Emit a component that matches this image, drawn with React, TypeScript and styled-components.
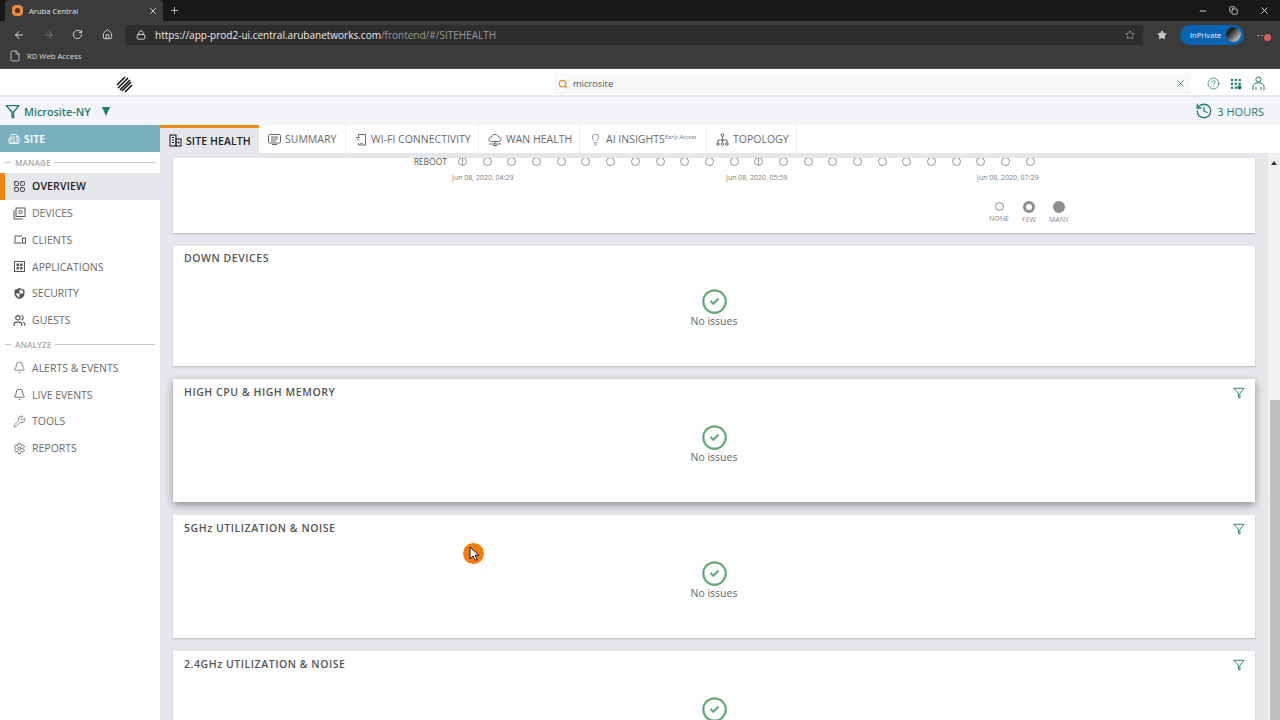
import styled, { createGlobalStyle } from "styled-components";
import {
    ArrowLeft, ArrowRight, Bell, Building2, CircleCheck, CircleHelp, Copy, File, History, Home,
    Lightbulb, LayoutGrid, Lock, Minus, Plus, RotateCw, Settings, Star, Users, Wrench, X, Search
} from "lucide-react";

const TEAL = "#1f7a72";
const GREY_BG = "#e6e7ea";

const GlobalStyle = createGlobalStyle`
    html, body { margin: 0; padding: 0; background: #fff; }
    * { box-sizing: border-box; }
    body { font-family: "Open Sans", "Noto Sans", sans-serif; }
`;

const Page = styled.div`
    position: relative;
    width: 1280px;
    height: 720px;
    overflow: hidden;
    display: flex;
    flex-direction: column;
`;

/* browser chrome */
const TabStrip = styled.div`
    height: 21px;
    flex: none;
    background: #181818;
    display: flex;
    align-items: flex-end;
    padding-left: 5px;
    color: #e8e8e8;
`;
const BrowserTab = styled.div`
    width: 158px;
    height: 21px;
    background: #3b3b3b;
    border-radius: 3px 3px 0 0;
    display: flex;
    align-items: center;
    padding: 0 5px 0 7px;
    font-size: 7.6px;
    gap: 6px;
`;
const Favicon = styled.span`
    width: 11px;
    height: 11px;
    border-radius: 4px;
    background: #e08a42;
    display: flex;
    align-items: center;
    justify-content: center;
    &::after {
        content: "";
        width: 5px;
        height: 5px;
        border-radius: 50%;
        background: #4a3426;
    }
`;
const TabTitle = styled.span`
    flex: 1;
`;
const NewTab = styled.span`
    margin-left: 6px;
    height: 21px;
    display: flex;
    align-items: center;
    color: #bbb;
`;
const WindowButtons = styled.div`
    margin-left: auto;
    height: 21px;
    display: flex;
    align-items: center;
    gap: 21px;
    padding-right: 10px;
    color: #eee;
`;
const Toolbar = styled.div`
    height: 25px;
    flex: none;
    background: #3b3b3b;
    display: flex;
    align-items: center;
    color: #ddd;
    padding: 2px 0 0 13px;
`;
const NavGlyph = styled.span<{ $dim?: boolean }>`
    width: 29.5px;
    display: flex;
    color: ${(p) => (p.$dim ? "#777" : "#ddd")};
`;
const AddressBar = styled.div`
    width: 1018px;
    height: 20px;
    margin-left: -6px;
    background: #2d2d2d;
    border-radius: 2px;
    display: flex;
    align-items: center;
    padding: 0 8px 0 11px;
    font-size: 10px;
    color: #ececec;
    gap: 9px;
`;
const UrlDim = styled.span`
    color: #9a9a9a;
`;
const UrlText = styled.span`
    flex: 1;
    white-space: nowrap;
`;
const Collections = styled.span`
    margin-left: 14px;
    display: flex;
    color: #ccc;
`;
const PrivatePill = styled.div`
    width: 64px;
    height: 20px;
    margin-left: 13px;
    border-radius: 10px;
    background: #0b63b3;
    display: flex;
    align-items: center;
    justify-content: space-between;
    padding: 0 3px 0 10px;
    font-size: 7.6px;
    color: #eaf3ff;
`;
const Avatar = styled.span`
    width: 15px;
    height: 15px;
    border-radius: 50%;
    background: linear-gradient(135deg, #222 30%, #aaa 75%);
`;
const MoreDots = styled.span`
    position: relative;
    margin-left: 13px;
    font-size: 10px;
    letter-spacing: 1px;
    color: #ddd;
    &::after {
        content: "";
        position: absolute;
        left: 7px;
        top: 6px;
        width: 7px;
        height: 7px;
        border-radius: 50%;
        background: #d9606a;
    }
`;
const Bookmarks = styled.div`
    height: 23px;
    flex: none;
    background: #3b3b3b;
    border-bottom: 1px solid #555;
    display: flex;
    align-items: center;
    gap: 6px;
    padding: 0 0 2px 9px;
    font-size: 7.7px;
    color: #ddd;
`;

/* app header */
const AppHeader = styled.div`
    height: 28px;
    flex: none;
    background: #fff;
    border-bottom: 2px solid ${GREY_BG};
    display: flex;
    align-items: center;
    padding: 3px 0 0 116px;
`;
const LogoSlot = styled.span`
    display: flex;
    margin-top: 1px;
`;
const SearchBox = styled.div`
    width: 637px;
    height: 21px;
    margin-left: 421px;
    background: #f7f9f9;
    display: flex;
    align-items: center;
    padding: 0 5px 0 4px;
    font-size: 9.3px;
    color: #555;
    gap: 5px;
`;
const SearchText = styled.span`
    flex: 1;
`;
const HeaderIcons = styled.div`
    display: flex;
    align-items: center;
    gap: 10px;
    margin-left: 16px;
    color: ${TEAL};
`;
const FilterBar = styled.div`
    height: 28px;
    flex: none;
    background: #f3f5f8;
    display: flex;
    align-items: center;
    padding: 0 16px 0 5px;
    color: ${TEAL};
    font-size: 10.8px;
    font-weight: 600;
`;
const SiteName = styled.span`
    margin-left: 4px;
`;
const Caret = styled.span`
    width: 0;
    height: 0;
    margin-left: 11px;
    border-left: 4.5px solid transparent;
    border-right: 4.5px solid transparent;
    border-top: 9px solid ${TEAL};
`;
const TimeRange = styled.div`
    margin-left: auto;
    display: flex;
    align-items: center;
    gap: 4px;
    font-size: 11px;
    font-weight: 500;
`;

/* main */
const Main = styled.div`
    flex: 1;
    min-height: 0;
    display: flex;
`;
const Sidebar = styled.nav`
    width: 160px;
    flex: none;
    background: #fff;
`;
const SiteHead = styled.div`
    height: 27px;
    background: #7aafbf;
    color: #f4f8fa;
    display: flex;
    align-items: center;
    gap: 4px;
    padding-left: 8px;
    font-size: 10.5px;
    font-weight: 700;
`;
const SectionLabel = styled.div`
    height: 21px;
    display: flex;
    align-items: center;
    gap: 4px;
    padding: 0 5px;
    font-size: 8px;
    font-weight: 700;
    color: #b5b5b5;
    &::before, &::after {
        content: "";
        height: 1px;
        background: #c8c8c8;
    }
    &::before { width: 6px; }
    &::after { flex: 1; }
`;
const NavRow = styled.div<{ $active?: boolean }>`
    height: 26.75px;
    display: flex;
    align-items: center;
    gap: 6px;
    padding-left: ${(p) => (p.$active ? "8px" : "13px")};
    border-left: ${(p) => (p.$active ? "5px solid #f5860f" : "none")};
    background: ${(p) => (p.$active ? GREY_BG : "transparent")};
    color: ${(p) => (p.$active ? "#222" : "#6a6a6a")};
    font-size: 10.5px;
    font-weight: ${(p) => (p.$active ? 600 : 400)};
    letter-spacing: ${(p) => (p.$active ? ".15px" : "0")};
`;
const Right = styled.div`
    flex: 1;
    min-width: 0;
    display: flex;
    flex-direction: column;
    background: ${GREY_BG};
`;
const Tabs = styled.div`
    height: 28px;
    flex: none;
    background: #fff;
    display: flex;
`;
const Tab = styled.div<{ $active?: boolean; $width: number }>`
    width: ${(p) => p.$width}px;
    display: flex;
    align-items: center;
    gap: 4px;
    padding-left: 9px;
    font-size: 10.5px;
    white-space: nowrap;
    color: ${(p) => (p.$active ? "#222" : "#6a6a6a")};
    font-weight: ${(p) => (p.$active ? 600 : 400)};
    letter-spacing: ${(p) => (p.$active ? ".1px" : "0")};
    background: ${(p) => (p.$active ? GREY_BG : "#fff")};
    border-top: ${(p) => (p.$active ? "3px solid #ee8a1d" : "none")};
    border-right: ${(p) => (p.$active ? "none" : "1px solid #f0f0f0")};
`;
const EarlyAccess = styled.sup`
    font-size: 6px;
    font-style: italic;
    margin-left: -4px;
    color: #777;
    position: relative;
    top: -2px;
`;
const ContentRow = styled.div`
    flex: 1;
    min-height: 0;
    display: flex;
`;
const Scroller = styled.div`
    flex: 1;
    min-width: 0;
    overflow: hidden;
    padding: 5px 13px 0 13px;
    display: flex;
    flex-direction: column;
    gap: 13px;
`;
const ScrollTrack = styled.div`
    width: 12px;
    flex: none;
    background: #f1f1f1;
    display: flex;
    flex-direction: column;
    align-items: flex-end;
`;
const ScrollArrow = styled.span`
    width: 0;
    height: 0;
    margin: 8px 3px 0 0;
    border-left: 3px solid transparent;
    border-right: 3px solid transparent;
    border-bottom: 4px solid #333;
`;
const ScrollThumb = styled.div`
    width: 10px;
    height: 320px;
    margin-top: 235px;
    background: #c1c1c1;
`;
const CardBox = styled.section<{ $height: number; $raised?: boolean }>`
    flex: none;
    height: ${(p) => p.$height}px;
    background: #fff;
    box-shadow: ${(p) => (p.$raised ? "0 3px 8px rgba(0,0,0,.38)" : "0 1px 2px rgba(0,0,0,.2)")};
`;
const CardHead = styled.div<{ $tall?: boolean }>`
    height: ${(p) => (p.$tall ? "45px" : "42px")};
    padding: ${(p) => (p.$tall ? "6px" : "5px")} 10px 0 11px;
    display: flex;
    align-items: flex-start;
    justify-content: space-between;
    color: #555;
    font-size: 10.5px;
    font-weight: 600;
    letter-spacing: .55px;
    line-height: 14px;
`;
const CardFilter = styled.span`
    display: flex;
    margin-top: 2px;
`;
const NoIssues = styled.div`
    display: flex;
    flex-direction: column;
    align-items: center;
    color: #666;
    font-size: 10.5px;
    line-height: 14px;
`;
const GreenCheck = styled(CircleCheck)`
    color: #68a97b;
    display: block;
    margin-bottom: -1px;
`;
const TimelineRow = styled.div`
    display: flex;
    align-items: flex-start;
    height: 8px;
`;
const TimelineLabel = styled.span`
    width: 274px;
    text-align: right;
    font-size: 8.5px;
    line-height: 8px;
    font-weight: 500;
    color: #555;
    flex: none;
`;
/* the marks run under the card's top edge, so the row cuts them off */
const Dots = styled.div`
    width: 577px;
    height: 8px;
    margin-left: 11px;
    overflow: hidden;
    display: flex;
    justify-content: space-between;
`;
const Dot = styled.span<{ $power?: boolean }>`
    position: relative;
    width: 9px;
    height: 9px;
    margin-top: -1px;
    border-radius: 50%;
    border: 1px solid #949494;
    flex: none;
    &::after {
        content: "";
        display: ${(p) => (p.$power ? "block" : "none")};
        position: absolute;
        left: 3px;
        top: -2px;
        width: 1px;
        height: 9px;
        background: #949494;
    }
`;
const Dates = styled.div`
    display: grid;
    grid-template-columns: 274px 251px auto;
    padding-left: 279px;
    margin-top: 7px;
    font-size: 7px;
    line-height: 10px;
    color: #777;
    opacity: .95;
`;
const Legend = styled.div`
    display: flex;
    justify-content: flex-end;
    padding-right: 181px;
    margin-top: 18px;
`;
const LegendItem = styled.div`
    width: 30px;
    display: flex;
    flex-direction: column;
    align-items: center;
    gap: 2px;
    font-size: 7px;
    line-height: 9px;
    color: #888;
`;
const LegendMark = styled.span<{ $kind: "none" | "few" | "many" }>`
    width: ${(p) => (p.$kind === "none" ? "9px" : "12px")};
    height: ${(p) => (p.$kind === "none" ? "9px" : "12px")};
    margin: ${(p) => (p.$kind === "none" ? "1px 0" : "0")};
    border-radius: 50%;
    border: ${(p) => (p.$kind === "none" ? "1px solid #888" : p.$kind === "few" ? "3px solid #8e8e8e" : "6px solid #8e8e8e")};
`;
const Pointer = styled.div`
    position: absolute;
    left: 463px;
    top: 543px;
    width: 21px;
    height: 21px;
    border-radius: 50%;
    background: #f57c0a;
`;

const FunnelIcon = ({ size = 13, weight = 1.3 }: { size?: number; weight?: number }) => (
    <svg width={size} height={size} viewBox="0 0 14 14" fill="none" stroke={TEAL} strokeWidth={weight} strokeLinejoin="round">
        <path d="M1 1.5h12L8 7.5v5.5L6.5 12V7.5z" />
    </svg>
);

const StripeLogo = () => (
    <svg width="17" height="17" viewBox="0 0 17 17" stroke="#111" strokeWidth="1.6">
        <path d="M1 9 9 1M2 12 12 2M4 14 14 4M6 15 15 6M9 16 16 9" />
    </svg>
);

const AppsGear = () => (
    <svg width="12" height="12" viewBox="0 0 14 14" fill={TEAL}>
        {[1, 5.5, 10].flatMap((y) => [1, 5.5, 10].map((x) => (x === 10 && y === 10 ? null : <rect key={`${x}-${y}`} x={x} y={y} width="2.6" height="2.6" />)))}
        <circle cx="11" cy="11" r="2.5" />
    </svg>
);

const PersonOutline = () => (
    <svg width="13" height="15" viewBox="0 0 13 15" fill="none" stroke={TEAL} strokeWidth="1">
        <circle cx="6.5" cy="3.5" r="2.6" />
        <path d="M1 14v-3.5C1 8 3.5 6.8 6.5 6.8S12 8 12 10.5V14M4 14v-3M9 14v-3" />
    </svg>
);

const DevicesIcon = () => (
    <svg width="13" height="13" viewBox="0 0 13 13" fill="none" stroke="#555" strokeWidth="1">
        <rect x="3" y="1" width="9" height="8.5" />
        <circle cx="7.5" cy="5" r="1.6" />
        <path d="M1 3v9h9" />
    </svg>
);

const ClientsIcon = () => (
    <svg width="13" height="13" viewBox="0 0 13 13" fill="none" stroke="#555" strokeWidth="1">
        <path d="M2 3h7M2 3v6M0.5 10h8" />
        <rect x="9.5" y="5" width="3" height="5" />
    </svg>
);

const AppsIcon = () => (
    <svg width="13" height="13" viewBox="0 0 13 13" fill="#555">
        <path d="M1 1h11v11H1zM2 2v9h9V2z" fillRule="evenodd" />
        <rect x="3.5" y="3.5" width="2.5" height="2.5" />
        <rect x="7" y="3.5" width="2.5" height="2.5" />
        <rect x="3.5" y="7" width="2.5" height="2.5" />
        <rect x="7" y="7" width="2.5" height="2.5" />
    </svg>
);

const ShieldIcon = () => (
    <svg width="13" height="13" viewBox="0 0 13 13" fill="#555">
        <path d="M6.5 1 11.5 3v3.5c0 2.8-2.2 4.8-5 5.5-2.8-.7-5-2.7-5-5.5V3z" />
        <path d="M6.5 2.5v4h3.6V3.8z M6.5 6.5H2.9c.2 1.8 1.7 3.2 3.6 3.9z" fill="#fff" />
    </svg>
);

const SiteIcon = ({ color, size }: { color: string; size: number }) => (
    <svg width={size} height={size} viewBox="0 0 13 13" fill="none" stroke={color} strokeWidth="1.1">
        <rect x="1" y="1" width="6" height="11" />
        <rect x="7" y="5" width="5" height="7" />
        <path d="M3 3.5h2M3 6h2M3 8.5h2M8.5 8.5h2M9.5 7.5v2" />
    </svg>
);

const SummaryIcon = () => (
    <svg width="13" height="13" viewBox="0 0 13 13" fill="none" stroke="#666" strokeWidth="1">
        <rect x="0.5" y="1.5" width="12" height="8.5" rx="1" />
        <path d="M3 4h7M3 6h7M3 8h5M4 11.5h5" />
    </svg>
);

const ConnectivityIcon = () => (
    <svg width="12" height="13" viewBox="0 0 12 13" fill="none" stroke="#666" strokeWidth="1">
        <path d="M3.5 3.5V1.5h7v10.500h-7V10" />
        <path d="M1 4.800C2 4 4 4 5 4.800M2 6.500c.6-.5 1.400-.5 2 0M5.500 10.500h2" />
    </svg>
);

const WanIcon = () => (
    <svg width="14" height="13" viewBox="0 0 14 13" fill="none" stroke="#666" strokeWidth="1">
        <path d="M3.500 8.500C1.800 8.500 1 7.400 1 6.200s1-2.200 2.200-2.200C3.600 2.500 5 1.500 7 1.500c2.100 0 3.500 1.200 3.800 2.800 1.300.1 2.200 1 2.200 2.100s-.9 2.100-2.500 2.100z" />
        <path d="M1 11h12M5 12.500h4M7 8.500V11" />
    </svg>
);

const TopologyIcon = () => (
    <svg width="13" height="13" viewBox="0 0 13 13" fill="none" stroke="#666" strokeWidth="1">
        <circle cx="6.5" cy="2" r="1.400" />
        <circle cx="2" cy="11" r="1.300" />
        <circle cx="6.500" cy="11" r="1.300" />
        <circle cx="11" cy="11" r="1.300" />
        <path d="M6.500 3.400v6.300M2 9.700V7h9v2.700" />
    </svg>
);

const NAV_MANAGE = [
    { label: "OVERVIEW", icon: <LayoutGrid size={13} strokeWidth={1.5} color="#222" />, active: true },
    { label: "DEVICES", icon: <DevicesIcon /> },
    { label: "CLIENTS", icon: <ClientsIcon /> },
    { label: "APPLICATIONS", icon: <AppsIcon /> },
    { label: "SECURITY", icon: <ShieldIcon /> },
    { label: "GUESTS", icon: <Users size={13} strokeWidth={2} color="#555" /> },
];

const NAV_ANALYZE = [
    { label: "ALERTS & EVENTS", icon: <Bell size={13} strokeWidth={1.3} color="#555" /> },
    { label: "LIVE EVENTS", icon: <Bell size={13} strokeWidth={1.6} color="#555" /> },
    { label: "TOOLS", icon: <Wrench size={13} strokeWidth={1.3} color="#555" /> },
    { label: "REPORTS", icon: <Settings size={13} strokeWidth={1.6} color="#555" /> },
];

const CHECKS = [
    { title: "DOWN DEVICES", height: 120, label: true },
    { title: "HIGH CPU & HIGH MEMORY", height: 123, filter: true, raised: true, label: true },
    { title: "5GHz UTILIZATION & NOISE", height: 123, filter: true, label: true },
    { title: "2.4GHz UTILIZATION & NOISE", height: 123, filter: true },
];

export default function App() {
    return (
        <Page>
            <GlobalStyle />
            <TabStrip>
                <BrowserTab>
                    <Favicon />
                    <TabTitle>Aruba Central</TabTitle>
                    <X size={10} />
                </BrowserTab>
                <NewTab><Plus size={11} /></NewTab>
                <WindowButtons>
                    <Minus size={10} />
                    <Copy size={9} />
                    <X size={11} />
                </WindowButtons>
            </TabStrip>
            <Toolbar>
                <NavGlyph><ArrowLeft size={12} /></NavGlyph>
                <NavGlyph $dim><ArrowRight size={12} /></NavGlyph>
                <NavGlyph><RotateCw size={11} /></NavGlyph>
                <NavGlyph><Home size={11} /></NavGlyph>
                <AddressBar>
                    <Lock size={10} />
                    <UrlText>https://app-prod2-ui.central.arubanetworks.com<UrlDim>/frontend/#/SITEHEALTH</UrlDim></UrlText>
                    <Star size={10} color="#999" />
                </AddressBar>
                <Collections><Star size={10} fill="#ccc" /></Collections>
                <PrivatePill>InPrivate<Avatar /></PrivatePill>
                <MoreDots>··</MoreDots>
            </Toolbar>
            <Bookmarks>
                <File size={12} strokeWidth={1.5} />
                RD Web Access
            </Bookmarks>
            <AppHeader>
                <LogoSlot><StripeLogo /></LogoSlot>
                <SearchBox>
                    <Search size={10} color="#ef8f2b" strokeWidth={3} />
                    <SearchText>microsite</SearchText>
                    <X size={11} color={TEAL} strokeWidth={1.8} />
                </SearchBox>
                <HeaderIcons>
                    <CircleHelp size={13} strokeWidth={1.4} />
                    <AppsGear />
                    <PersonOutline />
                </HeaderIcons>
            </AppHeader>
            <FilterBar>
                <FunnelIcon size={15} />
                <SiteName>Microsite-NY</SiteName>
                <Caret />
                <TimeRange>
                    <History size={18} strokeWidth={1.7} />
                    3 HOURS
                </TimeRange>
            </FilterBar>
            <Main>
                <Sidebar>
                    <SiteHead>
                        <Building2 size={12} />
                        SITE
                    </SiteHead>
                    <SectionLabel>MANAGE</SectionLabel>
                    {NAV_MANAGE.map((item) => (
                        <NavRow key={item.label} $active={item.active}>{item.icon}{item.label}</NavRow>
                    ))}
                    <SectionLabel>ANALYZE</SectionLabel>
                    {NAV_ANALYZE.map((item) => (
                        <NavRow key={item.label}>{item.icon}{item.label}</NavRow>
                    ))}
                </Sidebar>
                <Right>
                    <Tabs>
                        <Tab $active $width={99}><SiteIcon color="#222" size={13} />SITE HEALTH</Tab>
                        <Tab $width={87}><SummaryIcon />SUMMARY</Tab>
                        <Tab $width={133}><ConnectivityIcon />WI-FI CONNECTIVITY</Tab>
                        <Tab $width={101}><WanIcon />WAN HEALTH</Tab>
                        <Tab $width={127}><Lightbulb size={13} strokeWidth={1.3} />AI INSIGHTS<EarlyAccess>Early Access</EarlyAccess></Tab>
                        <Tab $width={90}><TopologyIcon />TOPOLOGY</Tab>
                    </Tabs>
                    <ContentRow>
                        <Scroller>
                            <CardBox $height={75}>
                                <TimelineRow>
                                    <TimelineLabel>REBOOT</TimelineLabel>
                                    <Dots>
                                        {Array.from({ length: 24 }, (_, i) => (
                                            <Dot key={i} $power={i === 0 || i === 12} />
                                        ))}
                                    </Dots>
                                </TimelineRow>
                                <Dates>
                                    <span>Jun 08, 2020, 04:29</span>
                                    <span>Jun 08, 2020, 05:59</span>
                                    <span>Jun 08, 2020, 07:29</span>
                                </Dates>
                                <Legend>
                                    <LegendItem><LegendMark $kind="none" />NONE</LegendItem>
                                    <LegendItem><LegendMark $kind="few" />FEW</LegendItem>
                                    <LegendItem><LegendMark $kind="many" />MANY</LegendItem>
                                </Legend>
                            </CardBox>
                            {CHECKS.map((card) => (
                                <CardBox key={card.title} $height={card.height} $raised={card.raised}>
                                    <CardHead $tall={card.filter}>
                                        {card.title}
                                        {card.filter && <CardFilter><FunnelIcon size={12} weight={1.1} /></CardFilter>}
                                    </CardHead>
                                    <NoIssues>
                                        <GreenCheck size={27} strokeWidth={2} />
                                        {card.label && "No issues"}
                                    </NoIssues>
                                </CardBox>
                            ))}
                        </Scroller>
                        <ScrollTrack>
                            <ScrollArrow />
                            <ScrollThumb />
                        </ScrollTrack>
                    </ContentRow>
                </Right>
            </Main>
            <Pointer>
                <svg width="21" height="21" viewBox="0 0 21 21">
                    <path d="M7 4v12l3-3 2.2 4.4 2-1-2.2-4.2h4z" fill="#fff" stroke="#111" strokeWidth="1" />
                </svg>
            </Pointer>
        </Page>
    );
}
